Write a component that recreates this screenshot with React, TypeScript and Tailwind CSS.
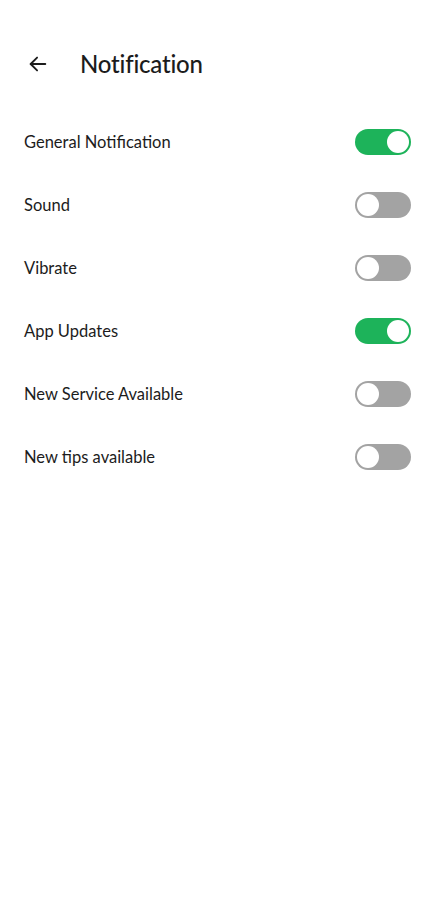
import { useState } from "react";

const items = [
  { label: "General Notification", on: true },
  { label: "Sound", on: false },
  { label: "Vibrate", on: false },
  { label: "App Updates", on: true },
  { label: "New Service Available", on: false },
  { label: "New tips available", on: false },
];

function Toggle({ on, onClick }: { on: boolean; onClick: () => void }) {
  return (
    <button
      onClick={onClick}
      className={`flex h-[26px] w-[56px] items-center rounded-full px-[2px] ${
        on ? "justify-end bg-[#1db35a]" : "justify-start bg-[#a3a3a3]"
      }`}
    >
      <span className="h-[22px] w-[22px] rounded-full bg-white" />
    </button>
  );
}

export default function App() {
  const [state, setState] = useState(items.map((i) => i.on));

  return (
    <div className="min-h-[900px] w-full bg-white font-['Lato',sans-serif] text-[#1c1c1c]">
      <header className="flex items-center pl-[27px] pt-[50px]">
        <svg width="22" height="22" viewBox="0 0 24 24" fill="none" stroke="#1c1c1c" strokeWidth="2" strokeLinecap="round" strokeLinejoin="round">
          <path d="M20 12H4" />
          <path d="M11 5l-7 7 7 7" />
        </svg>
        <h1 className="ml-[31px] text-[24px] font-medium leading-[28px] tracking-[-0.2px]">Notification</h1>
      </header>
      <ul className="mt-[32px] flex flex-col px-[24px]">
        {items.map((item, i) => (
          <li key={item.label} className="flex h-[63px] items-center justify-between">
            <span className="text-[16.5px] leading-5">{item.label}</span>
            <Toggle
              on={state[i]}
              onClick={() => setState((s) => s.map((v, j) => (j === i ? !v : v)))}
            />
          </li>
        ))}
      </ul>
    </div>
  );
}
